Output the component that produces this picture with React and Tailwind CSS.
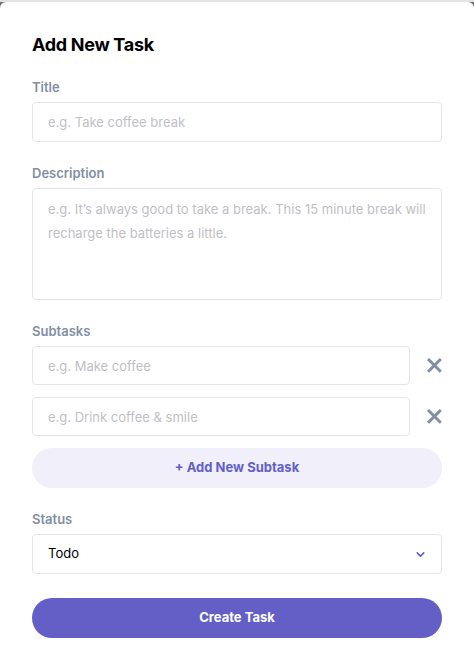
import React, { useState } from "react";
import { ChevronDown } from "lucide-react";

const font = { fontFamily: "'Inter', 'Noto Sans', sans-serif" };

const CrossIcon = () => (
  <svg width="15" height="15" viewBox="0 0 15 15" fill="#828FA3">
    <g fillRule="evenodd">
      <path d="m12.7279 0 2.1214 2.1213L2.1213 14.8492 0 12.7279z" />
      <path d="M0 2.1213 2.1213 0l12.7279 12.7279-2.1213 2.1213z" />
    </g>
  </svg>
);

const Label = ({ children }) => (
  <label className="block text-[13px] leading-[15px] font-semibold text-[#828fa3] mb-[7px]">
    {children}
  </label>
);

export default function App() {
  const [subtasks, setSubtasks] = useState([
    "e.g. Make coffee",
    "e.g. Drink coffee & smile",
  ]);

  return (
    <div className="w-[474px] h-[669px] bg-[#6f6f6f] overflow-hidden" style={font}>
      <div className="h-[2px] bg-[#e3e3e3]" />
      <div className="bg-white rounded-md h-[672px] px-8 pt-[31px]">
        <h2 className="text-[18px] leading-[23px] font-bold text-black tracking-[-0.3px]">
          Add New Task
        </h2>

        <div className="mt-6">
          <Label>Title</Label>
          <input
            className="w-full h-10 border border-[#e4e4ea] rounded px-[15px] text-[13px] text-black placeholder:text-[#bfbfc6] outline-none"
            placeholder="e.g. Take coffee break"
          />
        </div>

        <div className="mt-6">
          <Label>Description</Label>
          <textarea
            className="w-full h-[112px] border border-[#e4e4ea] rounded px-[15px] py-[8px] text-[13px] leading-6 text-black placeholder:text-[#bfbfc6] outline-none resize-none block"
            placeholder="e.g. It’s always good to take a break. This 15 minute break will recharge the batteries a little."
          />
        </div>

        <div className="mt-6">
          <Label>Subtasks</Label>
          <div className="flex flex-col gap-3">
            {subtasks.map((s, i) => (
              <div key={i} className="flex items-center gap-[17px]">
                <input
                  className="flex-1 h-[39px] border border-[#e4e4ea] rounded px-[15px] text-[13px] text-black placeholder:text-[#bfbfc6] outline-none"
                  placeholder={s}
                />
                <button
                  className="w-[15px] flex items-center justify-center"
                  onClick={() => setSubtasks(subtasks.filter((_, j) => j !== i))}
                >
                  <CrossIcon />
                </button>
              </div>
            ))}
            <button className="w-full h-10 rounded-full bg-[#f0effa] text-[#635fc7] text-[13px] font-bold">
              + Add New Subtask
            </button>
          </div>
        </div>

        <div className="mt-6">
          <Label>Status</Label>
          <div className="w-full h-10 border border-[#e4e4ea] rounded pl-[15px] pr-[14px] flex items-center justify-between">
            <span className="text-[13px] text-black">Todo</span>
            <ChevronDown size={13} strokeWidth={3} className="text-[#635fc7]" />
          </div>
        </div>

        <button className="mt-6 w-full h-10 rounded-full bg-[#635fc7] text-white text-[13px] font-bold">
          Create Task
        </button>
      </div>
    </div>
  );
}
